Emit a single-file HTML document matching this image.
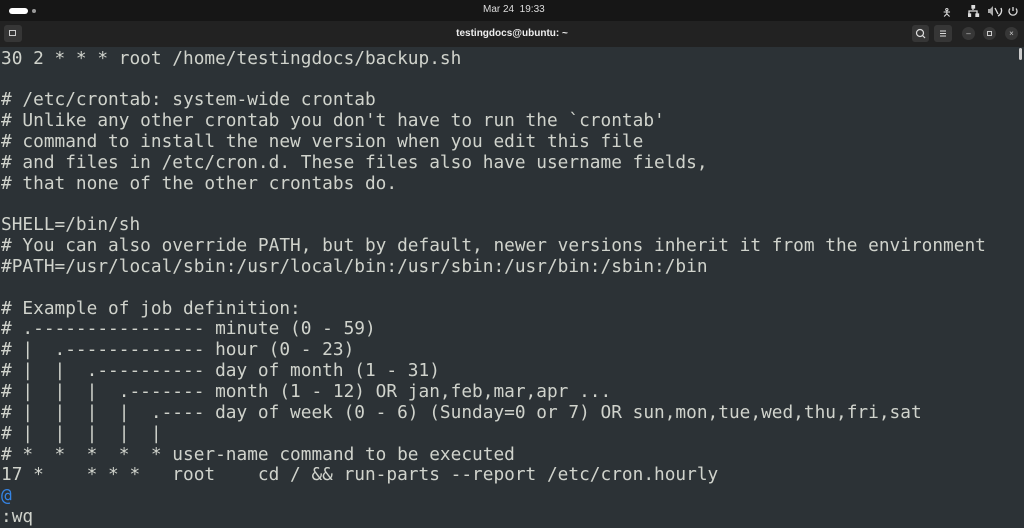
<!DOCTYPE html>
<html><head><meta charset="utf-8"><style>
*{margin:0;padding:0;box-sizing:border-box}
body{width:1024px;height:528px;overflow:hidden;background:#2c3236;font-family:"Liberation Sans",sans-serif;position:relative}
.top{position:absolute;left:0;top:0;width:1024px;height:21px;background:#161616;color:#ddd;font-size:10px}
.title{position:absolute;left:0;top:21px;width:1024px;height:26px;background:#222;color:#eee;font-size:10px;font-weight:bold}
.btn{position:absolute;background:#363636;border-radius:3px}
.circ{position:absolute;width:13px;height:13px;border-radius:50%;background:#373737;top:27px;color:#ccc;font-size:8px;text-align:center;line-height:13px}
pre{position:absolute;left:1px;top:48.5px;font-family:"DejaVu Sans Mono","Liberation Mono",monospace;font-size:17.8px;line-height:20.85px;color:#d0d3cc}
.sb{position:absolute;right:2px;top:48px;width:3px;height:12px;background:#ccc;border-radius:2px}
</style></head><body>
<div class="top">
<div style="position:absolute;left:9px;top:8px;width:19px;height:6px;border-radius:3px;background:#fff"></div>
<div style="position:absolute;left:32px;top:9px;width:4px;height:4px;border-radius:50%;background:#999"></div>
<div style="position:absolute;left:483px;top:4px">Mar 24&nbsp; 19:33</div>
<div style="position:absolute;left:942px;top:4px;font-size:11px">🯅</div>
<svg style="position:absolute;left:968px;top:5px" width="54" height="12" viewBox="0 0 54 12" fill="none" stroke="#ddd" stroke-width="1.3"><path d="M5 1v4M1 10V6h8v4M1 10h0M5 5v0"/><rect x="4" y="0.5" width="2.5" height="2.5" fill="#ddd"/><rect x="0" y="9" width="2.5" height="2.5" fill="#ddd"/><rect x="8" y="9" width="2.5" height="2.5" fill="#ddd"/><path d="M20 4h2l3-3v10l-3-3h-2z" fill="#aaa" stroke="none"/><path d="M27 3l3 6M33 3a6 6 0 0 1-3 8"/><path d="M45 2v4M42 3.5a4 4 0 1 0 6 0"/></svg>
</div>
<div class="title">
<div class="btn" style="left:4px;top:4px;width:18px;height:17px"><div style="position:absolute;left:5px;top:5px;width:7px;height:6px;border:1px solid #ccc"></div></div>
<div style="position:absolute;left:0;width:1024px;text-align:center;top:7px">testingdocs@ubuntu: ~</div>
<div class="btn" style="left:912px;top:4px;width:17px;height:17px"><svg width="17" height="17"><circle cx="8" cy="8" r="3.5" fill="none" stroke="#ddd" stroke-width="1.2"/><path d="M10.5 10.5l2.5 2.5" stroke="#ddd" stroke-width="1.2"/></svg></div>
<div class="btn" style="left:934px;top:4px;width:18px;height:17px"><svg width="18" height="17"><path d="M6 6h6M6 8.5h6M6 11h6" stroke="#ddd"/></svg></div>
</div>
<div class="circ" style="left:962px">–</div>
<div class="circ" style="left:983px"><svg width="13" height="13"><rect x="4.5" y="4.5" width="4" height="4" fill="none" stroke="#ccc"/></svg></div>
<div class="circ" style="left:1005px">×</div>
<pre>30 2 * * * root /home/testingdocs/backup.sh

# /etc/crontab: system-wide crontab
# Unlike any other crontab you don't have to run the `crontab'
# command to install the new version when you edit this file
# and files in /etc/cron.d. These files also have username fields,
# that none of the other crontabs do.

SHELL=/bin/sh
# You can also override PATH, but by default, newer versions inherit it from the environment
#PATH=/usr/local/sbin:/usr/local/bin:/usr/sbin:/usr/bin:/sbin:/bin

# Example of job definition:
# .---------------- minute (0 - 59)
# |  .------------- hour (0 - 23)
# |  |  .---------- day of month (1 - 31)
# |  |  |  .------- month (1 - 12) OR jan,feb,mar,apr ...
# |  |  |  |  .---- day of week (0 - 6) (Sunday=0 or 7) OR sun,mon,tue,wed,thu,fri,sat
# |  |  |  |  |
# *  *  *  *  * user-name command to be executed
17 *    * * *   root    cd / &amp;&amp; run-parts --report /etc/cron.hourly
<span style="color:#3584e4">@</span>
:wq</pre>
<div class="sb"></div>
</body></html>
